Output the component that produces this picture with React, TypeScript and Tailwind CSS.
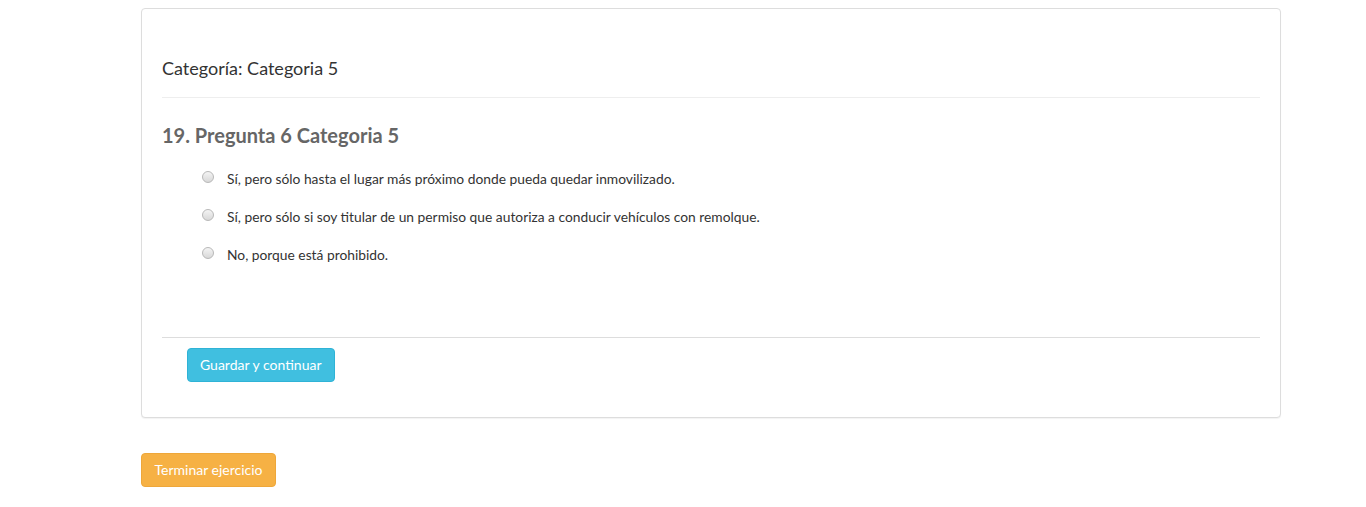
import React from "react";

const options = [
  "Sí, pero sólo hasta el lugar más próximo donde pueda quedar inmovilizado.",
  "Sí, pero sólo si soy titular de un permiso que autoriza a conducir vehículos con remolque.",
  "No, porque está prohibido.",
];

export default function App() {
  return (
    <div
      className="min-h-[507px] bg-white text-[#333]"
      style={{ fontFamily: "Lato, 'Open Sans', sans-serif" }}
    >
      <div className="ml-[141px] w-[1140px] pt-[8px]">
        <div className="rounded-[4px] border border-[#dddddd] bg-white shadow-[0_1px_1px_rgba(0,0,0,0.05)] px-[20px] pb-[35px]">
          <div className="pt-[49px] h-[88px] text-[18px] leading-[20px] text-[#333]">
            Categoría: Categoria 5
          </div>
          <div className="h-px bg-[#eeeeee]" />
          <div className="mt-[26px] text-[20px] leading-[22px] font-bold text-[#666]">
            19. Pregunta 6 Categoria 5
          </div>
          <div className="mt-[23px] flex flex-col gap-[20px] pl-[40px]">
            {options.map((o) => (
              <label key={o} className="flex items-start h-[18px] text-[13.8px] leading-[18px] text-[#333]">
                <span className="mt-[2px] mr-[13px] h-[12px] w-[12px] shrink-0 rounded-full border border-[#b8b8b8] bg-gradient-to-b from-[#f4f4f4] to-[#d8d8d8]" />
                <span className="mt-[1px]">{o}</span>
              </label>
            ))}
          </div>
          <div className="mt-[74px] h-px bg-[#dddddd]" />
          <div className="mt-[10px] pl-[25px]">
            <button className="h-[34px] rounded-[4px] border border-[#2fb3d6] bg-[#40bfe0] px-[12px] text-[14px] leading-[20px] text-white">
              Guardar y continuar
            </button>
          </div>
        </div>
        <div className="mt-[35px]">
          <button className="h-[34px] w-[135px] rounded-[4px] border border-[#eea73a] bg-[#f6b144] px-[12px] text-[14px] leading-[20px] text-white">
            Terminar ejercicio
          </button>
        </div>
      </div>
    </div>
  );
}
